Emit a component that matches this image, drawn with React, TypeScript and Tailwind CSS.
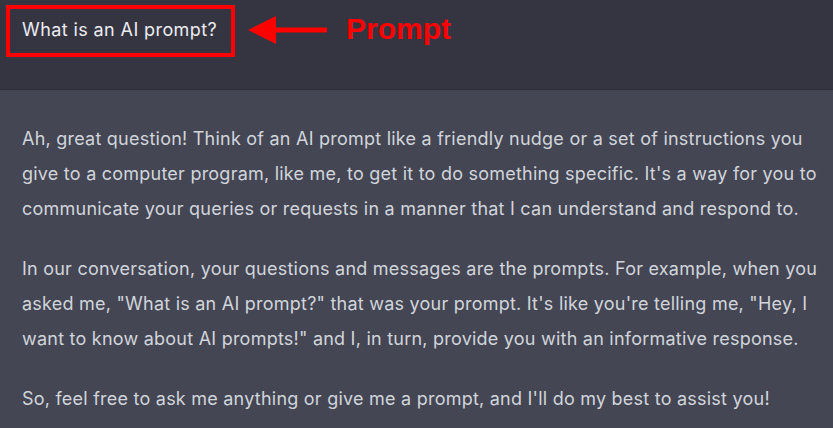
const ANSWER = [
  "Ah, great question! Think of an AI prompt like a friendly nudge or a set of instructions you give to a computer program, like me, to get it to do something specific. It's a way for you to communicate your queries or requests in a manner that I can understand and respond to.",
  "In our conversation, your questions and messages are the prompts. For example, when you asked me, \"What is an AI prompt?\" that was your prompt. It's like you're telling me, \"Hey, I want to know about AI prompts!\" and I, in turn, provide you with an informative response.",
  "So, feel free to ask me anything or give me a prompt, and I'll do my best to assist you!",
];

function ArrowLeft() {
  return (
    <svg width="79" height="28" viewBox="0 0 79 28" className="block">
      <polygon points="0,14 28,0 28,11.5 79,11.5 79,16.5 28,16.5 28,28" fill="#ff0000" />
    </svg>
  );
}

export default function App() {
  return (
    <div className="min-h-[428px] w-[833px] bg-[#444654] font-['Inter',sans-serif]">
      {/* Prompt row */}
      <div className="flex h-[90px] items-start border-b border-[#2d2e37] bg-[#343541] pl-[6px] pt-[5px]">
        <div className="h-[52px] w-[229px] border-4 border-[#ff0000] pl-[12px] pt-[9px]">
          <p className="text-[18px] leading-[24px] tracking-[0.4px] text-[#ececf1]">What is an AI prompt?</p>
        </div>
        <div className="ml-[13px] mt-[11px]">
          <ArrowLeft />
        </div>
        <span className="ml-[19px] mt-[7px] font-['Liberation_Sans',sans-serif] text-[30px] font-bold leading-[34px] text-[#ff0000]">
          Prompt
        </span>
      </div>

      {/* Answer */}
      <div className="pl-[22px] pr-[6px] pt-[31px] pb-[10px] text-[18px] leading-[35px] tracking-[0.23px] text-[#d1d5db]">
        {ANSWER.map((para, i) => (
          <p key={i} className="mb-[25px] last:mb-0">
            {para}
          </p>
        ))}
      </div>
    </div>
  );
}
